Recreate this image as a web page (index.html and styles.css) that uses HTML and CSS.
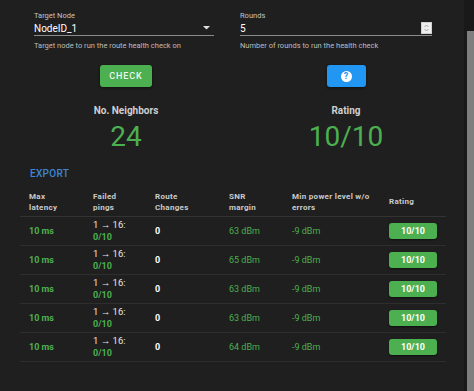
FILE: index.html
```html
<!DOCTYPE html>
<html>
<head>
<meta charset="utf-8">
<link rel="stylesheet" href="styles.css">
</head>
<body>
<div class="page">
  <div class="main">
    <div class="grid">
      <div class="field left">
        <div class="label">Target Node</div>
        <div class="input-row">
          <span class="value">NodeID_1</span>
          <svg class="caret" width="7" height="4" viewBox="0 0 7 4"><path d="M0 0 L7 0 L3.5 3.5 Z" fill="#e0e0e0"/></svg>
        </div>
        <div class="helper">Target node to run the route health check on</div>
      </div>
      <div class="field right">
        <div class="label">Rounds</div>
        <div class="input-row">
          <span class="value">5</span>
          <svg class="spin" width="11" height="12" viewBox="0 0 11 12"><rect x="0.5" y="0.5" width="10" height="11" fill="#efefef" stroke="#d0d0d0"/><path d="M3.5 5 L5.5 3 L7.5 5 M3.5 7 L5.5 9 L7.5 7" fill="none" stroke="#9a9a9a" stroke-width="0.9"/></svg>
        </div>
        <div class="helper">Number of rounds to run the health check</div>
      </div>

      <div class="btn-cell"><button class="btn green">CHECK</button></div>
      <div class="btn-cell"><button class="btn blue"><span class="qmark">?</span></button></div>

      <div class="stat">
        <div class="stat-label">No. Neighbors</div>
        <div class="stat-value">24</div>
      </div>
      <div class="stat">
        <div class="stat-label">Rating</div>
        <div class="stat-value">10/10</div>
      </div>
    </div>

    <div class="export">EXPORT</div>

    <table class="results">
      <colgroup>
        <col class="c1"><col class="c2"><col class="c3"><col class="c4"><col class="c5"><col class="c6">
      </colgroup>
      <thead>
        <tr>
          <th>Max<br>latency</th>
          <th>Failed<br>pings</th>
          <th>Route<br>Changes</th>
          <th>SNR<br>margin</th>
          <th>Min power level w/o<br>errors</th>
          <th>Rating</th>
        </tr>
      </thead>
      <tbody>
        <tr>
          <td class="g b">10 ms</td>
          <td><div class="w">1 → 16:</div><div class="g b">0/10</div></td>
          <td class="wb">0</td>
          <td class="g">63 dBm</td>
          <td class="g">-9 dBm</td>
          <td><div class="chip">10/10</div></td>
        </tr>
        <tr>
          <td class="g b">10 ms</td>
          <td><div class="w">1 → 16:</div><div class="g b">0/10</div></td>
          <td class="wb">0</td>
          <td class="g">65 dBm</td>
          <td class="g">-9 dBm</td>
          <td><div class="chip">10/10</div></td>
        </tr>
        <tr>
          <td class="g b">10 ms</td>
          <td><div class="w">1 → 16:</div><div class="g b">0/10</div></td>
          <td class="wb">0</td>
          <td class="g">63 dBm</td>
          <td class="g">-9 dBm</td>
          <td><div class="chip">10/10</div></td>
        </tr>
        <tr>
          <td class="g b">10 ms</td>
          <td><div class="w">1 → 16:</div><div class="g b">0/10</div></td>
          <td class="wb">0</td>
          <td class="g">63 dBm</td>
          <td class="g">-9 dBm</td>
          <td><div class="chip">10/10</div></td>
        </tr>
        <tr>
          <td class="g b">10 ms</td>
          <td><div class="w">1 → 16:</div><div class="g b">0/10</div></td>
          <td class="wb">0</td>
          <td class="g">64 dBm</td>
          <td class="g">-9 dBm</td>
          <td><div class="chip">10/10</div></td>
        </tr>
      </tbody>
    </table>
  </div>
  <div class="scroll"><div class="thumb"></div></div>
</div>
</body>
</html>
```

FILE: styles.css
```css
html, body {
  margin: 0;
  padding: 0;
  background: #1f1f1f;
  width: 474px;
  height: 391px;
  overflow: hidden;
  font-family: Roboto, "Liberation Sans", Arial, sans-serif;
  color: #fff;
}

.page {
  display: flex;
  height: 391px;
}

.main {
  flex: 1;
  padding-left: 16px;
  padding-top: 11px;
}

.grid {
  display: grid;
  grid-template-columns: 220px 220px;
}

.field.left {
  margin-left: 18px;
  width: 180px;
}

.field.right {
  margin-left: 4px;
  width: 192px;
}

.label {
  font-size: 7.5px;
  line-height: 10px;
  color: #c4c4c4;
}

.input-row {
  display: flex;
  align-items: center;
  justify-content: space-between;
  height: 14px;
  border-bottom: 1px solid #8c8c8c;
}

.value {
  font-size: 10px;
  color: #fff;
}

.caret {
  margin-right: 4px;
}

.spin {
  display: block;
}

.helper {
  margin-top: 5px;
  font-size: 7.5px;
  line-height: 10px;
  color: #bdbdbd;
}

.btn-cell {
  display: flex;
  justify-content: center;
  margin-top: 14px;
}

.btn {
  border: none;
  border-radius: 3px;
  height: 22px;
  padding: 0;
  display: flex;
  align-items: center;
  justify-content: center;
  font-family: inherit;
  box-shadow: 0 1px 3px rgba(0,0,0,0.5);
}

.btn.green {
  width: 52px;
  background: #4caf50;
  color: #eef7ee;
  font-size: 9px;
  font-weight: 500;
  letter-spacing: 0.9px;
}

.btn.blue {
  width: 39px;
  background: #2196f3;
}

.qmark {
  width: 11px;
  height: 11px;
  border-radius: 50%;
  background: #fff;
  color: #2196f3;
  font-size: 9px;
  font-weight: 700;
  line-height: 11px;
  text-align: center;
}

.stat {
  text-align: center;
  margin-top: 17px;
}

.stat-label {
  font-size: 10px;
  line-height: 13px;
  font-weight: 700;
  color: #cfcfcf;
}

.stat-value {
  margin-top: 4px;
  font-size: 28px;
  line-height: 31px;
  color: #4caf50;
}

.export {
  margin-top: 16px;
  margin-left: 14px;
  font-size: 10px;
  line-height: 12px;
  font-weight: 500;
  color: #3d86d3;
  letter-spacing: 0.3px;
}

.results {
  margin-top: 8px;
  margin-left: 4px;
  width: 426px;
  border-collapse: collapse;
  table-layout: fixed;
}

.c1 { width: 64px; }
.c2 { width: 62px; }
.c3 { width: 74px; }
.c4 { width: 63px; }
.c5 { width: 97px; }
.c6 { width: 66px; }

.results th {
  height: 28px;
  padding: 0 0 0 9px;
  text-align: left;
  vertical-align: middle;
  font-size: 8px;
  line-height: 11.5px;
  font-weight: 700;
  letter-spacing: 0.3px;
  color: #cbcbcb;
  border-bottom: 1px solid #333;
}

.results td {
  height: 28px;
  padding: 0 0 0 9px;
  vertical-align: middle;
  font-size: 9px;
  line-height: 12px;
  border-bottom: 1px solid #2e2e2e;
}

.g { color: #4caf50; }
.w { color: #e6e6e6; font-weight: 400; font-size: 9.5px; }
.b { font-weight: 700; }
.wb { color: #fff; font-weight: 700; }

.chip {
  width: 48px;
  height: 16px;
  line-height: 16px;
  border-radius: 3px;
  background: #4caf50;
  color: #fff;
  font-weight: 700;
  font-size: 9px;
  text-align: center;
  box-shadow: 0 1px 2px rgba(0,0,0,0.5);
}

.scroll {
  width: 10px;
  background: #191919;
  display: flex;
  justify-content: flex-end;
}

.thumb {
  width: 7px;
  height: 360px;
  margin-top: 31px;
  background: #7e7e7e;
}
```
